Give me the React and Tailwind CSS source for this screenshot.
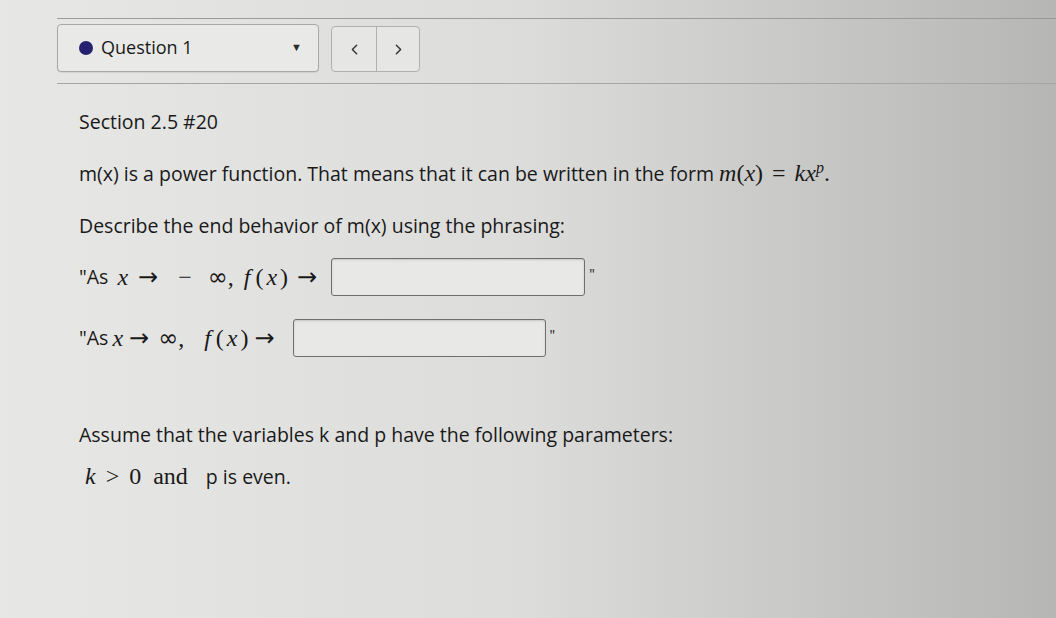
import { ChevronLeft, ChevronRight } from "lucide-react";

const mathFont = { fontFamily: '"Liberation Serif", "DejaVu Serif", serif' };
const symFont = { fontFamily: '"DejaVu Sans", sans-serif' };

const M = ({ children, italic = true, className = "" }) => (
  <span
    className={`${italic ? "italic" : ""} text-[24px] ${className}`}
    style={mathFont}
  >
    {children}
  </span>
);

const Sym = ({ children, className = "" }) => (
  <span className={`text-[24px] leading-none ${className}`} style={symFont}>
    {children}
  </span>
);

const Fx = ({ className = "" }) => (
  <span className={className}>
    <M>f</M>
    <M italic={false} className="ml-[5px]">(</M>
    <M className="ml-[3px]">x</M>
    <M italic={false} className="ml-[3px]">)</M>
  </span>
);

const AnswerBox = ({ width }) => (
  <span
    className={`inline-block h-[38px] ${width} rounded-[3px] border border-[#6f6f6f] bg-[#e8e9e6] shadow-[inset_0_1px_2px_rgba(0,0,0,0.15)] align-middle`}
  />
);

export default function App() {
  return (
    <div
      className="relative w-[1056px] h-[618px] overflow-hidden bg-linear-to-r from-[#e7e8e5] via-[#dcdcda] to-[#b6b6b5] text-[#191919]"
      style={{ fontFamily: '"Open Sans", "Noto Sans", sans-serif' }}
    >
      {/* Header */}
      <div className="ml-[57px] mt-[18px] border-t border-[#9a9a98]">
        <div className="flex items-center pt-[4px] pb-[11px]">
          <div className="flex items-center w-[262px] h-[48px] rounded-[4px] border border-[#a9aaa7] bg-[#e9eae7] pl-[21px] pr-[16px] shadow-[0_1px_1px_rgba(0,0,0,0.08)]">
            <span className="w-[14px] h-[14px] rounded-full bg-[#24226e]" />
            <span className="ml-[8px] text-[18px]">Question 1</span>
            <span className="ml-auto text-[11px] text-[#2a2a2a]">▼</span>
          </div>
          <div className="ml-[12px] mt-[3px] flex h-[46px] rounded-[4px] border border-[#b0b1ae] bg-[#e6e7e4]">
            <button className="w-[44px] flex items-center justify-center text-[#333]">
              <ChevronLeft size={17} strokeWidth={2} />
            </button>
            <button className="w-[43px] flex items-center justify-center border-l border-[#b0b1ae] text-[#333]">
              <ChevronRight size={17} strokeWidth={2} />
            </button>
          </div>
        </div>
        <div className="border-t border-[#a5a5a3]" />
      </div>

      {/* Body */}
      <div className="pl-[79px] pt-[24px] text-[19.5px]">
        <p className="leading-[28px]">Section 2.5 #20</p>

        <p className="mt-[23px] leading-[28px]">
          m(x) is a power function. That means that it can be written in the form{" "}
          <M>m</M>
          <M italic={false}>(</M>
          <M>x</M>
          <M italic={false}>)</M>
          <M italic={false} className="mx-[9px]">=</M>
          <M>kx</M>
          <sup className="italic text-[16px]" style={mathFont}>p</sup>
          <M italic={false}>.</M>
        </p>

        <p className="mt-[24px] leading-[28px]">
          Describe the end behavior of m(x) using the phrasing:
        </p>

        <div className="mt-[17px] flex items-center h-[40px]">
          <span>"As</span>
          <M className="ml-[9px]">x</M>
          <Sym className="ml-[10px]">→</Sym>
          <M italic={false} className="ml-[20px]">−</M>
          <Sym className="ml-[16px]">∞</Sym>
          <M italic={false}>,</M>
          <Fx className="ml-[10px]" />
          <Sym className="ml-[9px] mr-[14px]">→</Sym>
          <AnswerBox width="w-[254px]" />
          <span className="ml-[4px] text-[14px] self-start mt-[6px]">"</span>
        </div>

        <div className="mt-[21px] flex items-center h-[40px]">
          <span>"As</span>
          <M className="ml-[4px]">x</M>
          <Sym className="ml-[6px]">→</Sym>
          <Sym className="ml-[9px]">∞</Sym>
          <M italic={false}>,</M>
          <Fx className="ml-[20px]" />
          <Sym className="ml-[6px] mr-[18px]">→</Sym>
          <AnswerBox width="w-[253px]" />
          <span className="ml-[4px] text-[14px] self-start mt-[6px]">"</span>
        </div>

        <p className="mt-[63px] leading-[28px]">
          Assume that the variables k and p have the following parameters:
        </p>

        <p className="mt-[13px] leading-[28px] pl-[6px]">
          <M>k</M>
          <M italic={false} className="mx-[10px]">&gt;</M>
          <M italic={false}>0</M>
          <M italic={false} className="ml-[12px]">and</M>
          <span className="ml-[18px]">p is even.</span>
        </p>
      </div>
    </div>
  );
}
